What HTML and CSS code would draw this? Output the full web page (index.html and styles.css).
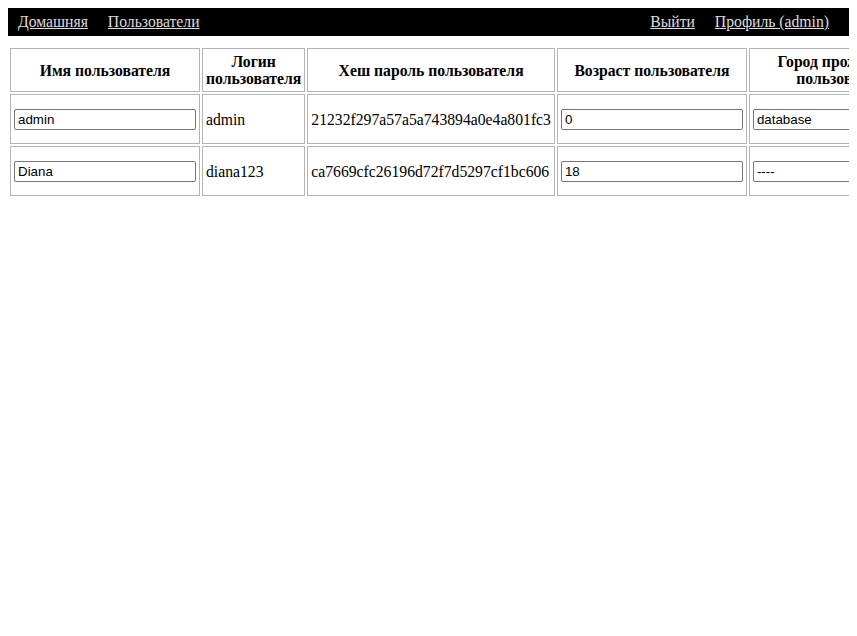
FILE: index.html
```html
<!DOCTYPE html>
<html>
<head>
	<meta charset="utf-8">
	<title>Пользователи</title>
	<link rel="stylesheet" href="styles.css">
</head>
<body>
<div class="nav">
	<div class="nav-left">
		<a href="#">Домашняя</a>
		<a href="#">Пользователи</a>
	</div>
	<div class="nav-right">
		<a href="#">Выйти</a>
		<a href="#">Профиль (admin)</a>
	</div>
</div>
<table class="users">
	<tr>
		<th>Имя пользователя</th>
		<th>Логин пользователя</th>
		<th>Хеш пароль пользователя</th>
		<th>Возраст пользователя</th>
		<th>Город проживания пользователя</th>
		<th>Действия</th>
	</tr>
	<tr>
		<td><input type="text" value="admin"></td>
		<td>admin</td>
		<td>21232f297a57a5a743894a0e4a801fc3</td>
		<td><input type="text" value="0"></td>
		<td><input type="text" value="database"></td>
		<td><button>Сохранить</button></td>
	</tr>
	<tr>
		<td><input type="text" value="Diana"></td>
		<td>diana123</td>
		<td>ca7669cfc26196d72f7d5297cf1bc606</td>
		<td><input type="text" value="18"></td>
		<td><input type="text" value="----"></td>
		<td><button>Сохранить</button></td>
	</tr>
</table>
</body>
</html>
```

FILE: styles.css
```css
body {
	margin: 8px;
	font-family: "Liberation Serif", "Times New Roman", serif;
	font-size: 15.7px;
	color: #000;
	background: #fff;
}
.nav {
	display: flex;
	justify-content: space-between;
	align-items: center;
	height: 28px;
	padding: 0 4px 0 10px;
	background: #000;
}
.nav a {
	margin-right: 16px;
	color: #ddd;
	text-decoration: underline;
}
.users {
	margin-top: 10px;
	border-spacing: 2px;
}
.users th,
.users td {
	border: 1px solid #b4b4b4;
	padding: 3px;
	line-height: 17px;
}
.users th {
	height: 36px;
	font-weight: bold;
	text-align: center;
}
.users td {
	height: 42px;
	text-align: left;
}
.users input {
	box-sizing: border-box;
	width: 182px;
	height: 21px;
	margin: 0;
	padding: 1px 3px;
	border: 1px solid #767676;
	border-radius: 2px;
	font-family: "Liberation Sans", Arial, sans-serif;
	font-size: 13.33px;
}
```
